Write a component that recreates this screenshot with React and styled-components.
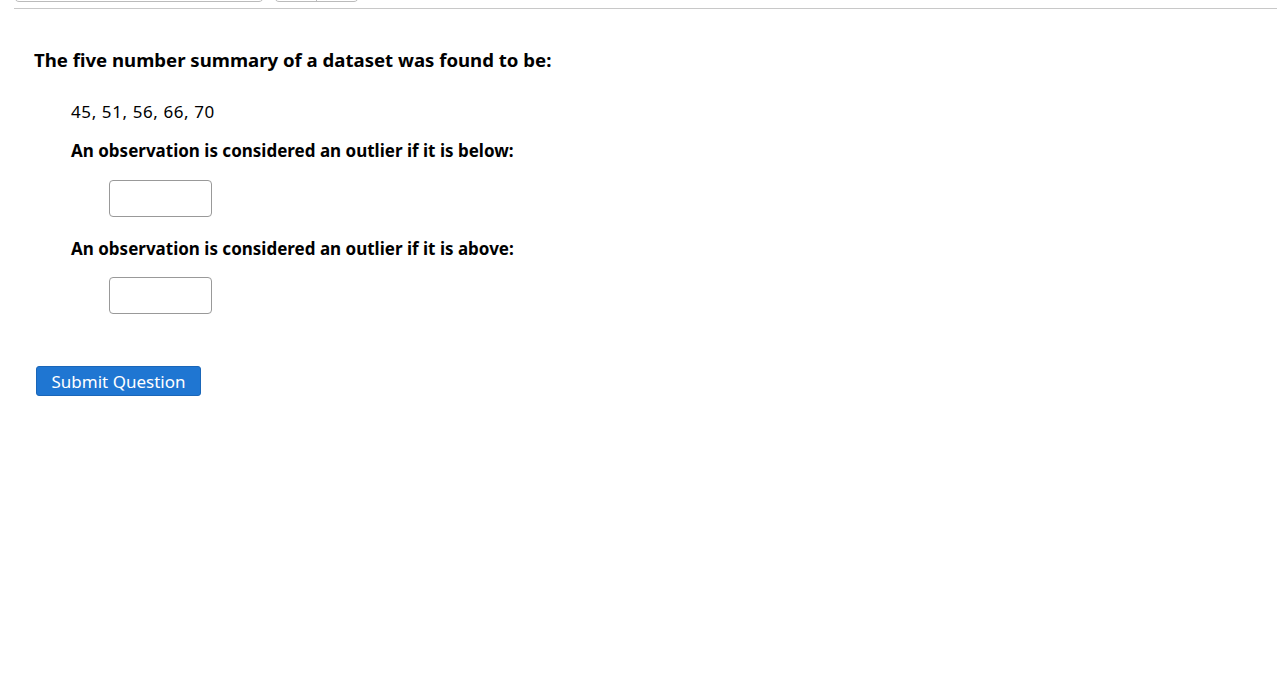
import React from "react"
import styled, { createGlobalStyle } from "styled-components"

const GlobalStyle = createGlobalStyle`
  body {
    margin: 0;
    background: #fff;
    font-family: "Noto Sans", "DejaVu Sans", sans-serif;
    color: #000;
  }
`

const Page = styled.div`
  width: 1277px;
  height: 680px;
  overflow: hidden;
`

const TopBar = styled.div`
  display: flex;
  align-items: flex-end;
  gap: 10px;
  height: 3px;
  padding-left: 14px;
  margin-top: -1px;
`

const ClippedField = styled.div`
  width: ${p => p.w}px;
  height: 8px;
  border: 1px solid #bbb;
  border-radius: 0 0 5px 5px;
  box-sizing: border-box;
  display: flex;
`

const FieldPart = styled.div`
  flex: 1;
  & + & {
    border-left: 1px solid #bbb;
  }
`

const Rule = styled.hr`
  margin: 6px 0 0 14px;
  border: 0;
  border-top: 1px solid #c8c8c8;
`

const Content = styled.div`
  padding: 39px 0 0 34px;
`

const Heading = styled.p`
  margin: 0;
  font-size: 18.6px;
  font-weight: 700;
  line-height: 24px;
`

const Indented = styled.div`
  padding: 29px 0 0 37px;
`

const Text = styled.p`
  margin: 0 0 ${p => p.mb || 0}px;
  font-size: 17px;
  font-weight: ${p => (p.bold ? 700 : 400)};
  letter-spacing: ${p => p.spacing || 0}px;
  line-height: 22px;
`

const AnswerBox = styled.input`
  display: block;
  width: 103px;
  height: 37px;
  margin: ${p => p.mt}px 0 ${p => p.mb || 0}px 38px;
  box-sizing: border-box;
  border: 1px solid #999;
  border-radius: 4px;
  font-size: 16px;
  padding: 0 6px;
`

const SubmitButton = styled.button`
  margin: 52px 0 0 2px;
  width: 165px;
  height: 30px;
  background: #1f76d2;
  color: #fff;
  border: 1px solid #1a66b8;
  border-radius: 3px;
  font-family: inherit;
  font-size: 17px;
  padding: 0;
  cursor: pointer;
`

export default function App() {
  return (
    <Page>
      <GlobalStyle />
      <TopBar>
        <ClippedField w={250} />
        <ClippedField w={85}>
          <FieldPart />
          <FieldPart />
        </ClippedField>
      </TopBar>
      <Rule />
      <Content>
        <Heading>The five number summary of a dataset was found to be:</Heading>
        <Indented>
          <Text mb={17} spacing={0.6}>45, 51, 56, 66, 70</Text>
          <Text bold>An observation is considered an outlier if it is below:</Text>
          <AnswerBox type="text" mt={18} mb={21} />
          <Text bold>An observation is considered an outlier if it is above:</Text>
          <AnswerBox type="text" mt={17} />
        </Indented>
        <SubmitButton>Submit Question</SubmitButton>
      </Content>
    </Page>
  )
}
